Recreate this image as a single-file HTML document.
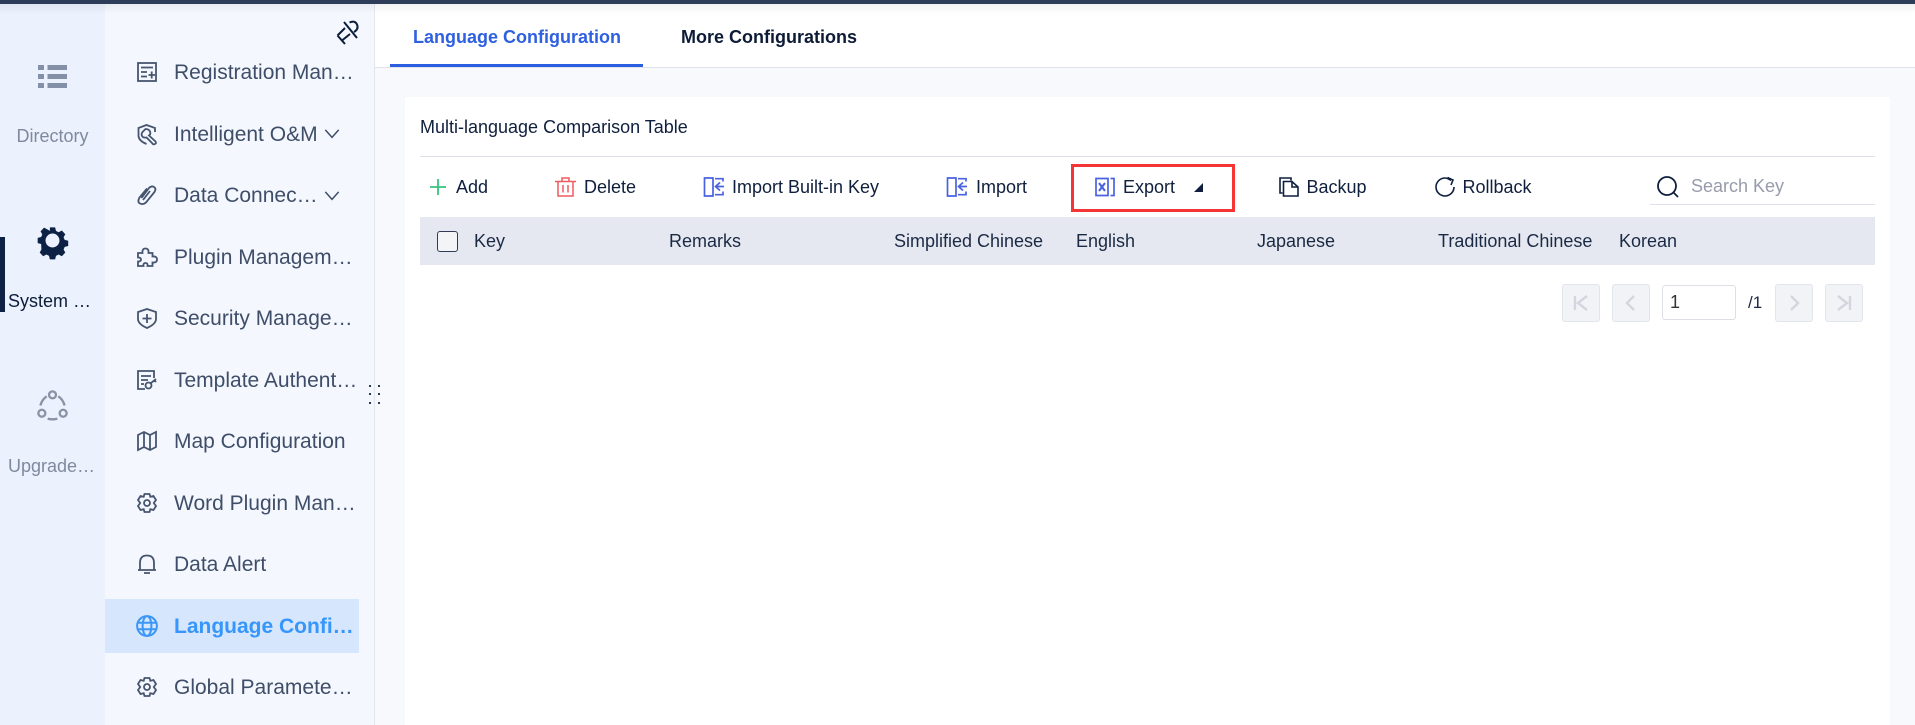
<!DOCTYPE html>
<html><head><meta charset="utf-8">
<style>
html,body{margin:0;padding:0;width:1915px;height:725px;overflow:hidden;background:#f8f9fd;font-family:"Liberation Sans",sans-serif}
.a{position:absolute}
.t{position:absolute;white-space:nowrap;line-height:30px;height:30px}
.m{font-size:21px;color:#3f4e68;left:174px}
.r{font-size:18px;color:#7f8a9e;text-align:center;left:0;width:105px}
.h{font-size:18px;color:#1b2a44}
.b{font-size:18px;color:#0f1f3d}
svg{position:absolute;fill:none;overflow:visible}
.si{stroke:#46556f;stroke-width:1.8;width:20px;height:20px;left:137px}
.pg{position:absolute;top:284px;width:36px;height:36px;background:#f2f3f7;border:1px solid #e3e5ec;border-radius:3px}
.pg svg{left:9px;top:9px;width:18px;height:18px;stroke:#d3d6de;stroke-width:2.4}
</style></head><body>
<div class="a" style="left:0;top:4px;width:105px;height:721px;background:#ebf1fd"></div>
<div class="a" style="left:105px;top:4px;width:269px;height:721px;background:#f4f7fe"></div>
<div class="a" style="left:374px;top:4px;width:1px;height:721px;background:#e3e6ef"></div>
<div class="a" style="left:375px;top:4px;width:1540px;height:63px;background:#fff"></div>
<div class="a" style="left:375px;top:67px;width:1540px;height:1px;background:#dfe2ea"></div>
<div class="a" style="left:390px;top:64px;width:253px;height:3px;background:#2b5fe0"></div>
<div class="a" style="left:0;top:4px;width:1915px;height:10px;background:linear-gradient(rgba(0,0,0,.05),rgba(0,0,0,0))"></div>
<div class="a" style="left:0;top:0;width:1915px;height:4px;background:#2c3c59"></div>
<div class="t" style="left:413px;top:22px;font-size:18px;font-weight:bold;color:#2e60e0">Language Configuration</div>
<div class="t" style="left:681px;top:22px;font-size:18px;font-weight:bold;color:#0d1b36">More Configurations</div>

<!-- rail -->
<svg style="left:38px;top:64px;width:30px;height:25px"><g fill="#8490a8"><rect x="0" y="1" width="6" height="5"/><rect x="0" y="10" width="6" height="5"/><rect x="0" y="19" width="6" height="5"/><rect x="9.500" y="1" width="19.500" height="5"/><rect x="9.500" y="10" width="19.500" height="5"/><rect x="9.500" y="19" width="19.500" height="5"/></g></svg>
<div class="t r" style="top:121px">Directory</div>
<div class="a" style="left:0;top:237px;width:5px;height:75px;background:#0c2143"></div>
<svg viewBox="0 0 32 32" style="left:36.500px;top:225px;width:31px;height:31px"><path fill="#0c2143" fill-rule="evenodd" d="M13 1h6l1 4 3 1.500 3.700-2 4 4.300-2 3.500 1.300 3 4 1v6l-4 1-1.300 3 2 3.500-4 4.300-3.700-2-3 1.500-1 4h-6l-1-4-3-1.500-3.700 2-4-4.300 2-3.500L3 20l-4-1v-6l4-1 1.300-3-2-3.500 4-4.300 3.700 2L13 5z M16 8a8 8 0 1 0 0 16a8 8 0 1 0 0-16z" transform="translate(1.600 1.600) scale(.9)"/></svg>
<div class="t" style="left:8px;top:286px;font-size:18px;color:#0c1d3a;width:85px">System …</div>
<svg viewBox="0 0 32 32" style="left:37px;top:390px;width:31px;height:31px;stroke:#8a93a5;stroke-width:2.400"><circle cx="16" cy="5" r="3.600"/><circle cx="5" cy="24" r="3.600"/><circle cx="27" cy="24" r="3.600"/><path d="M10 6.500Q5 10 3.500 16M22 6.500Q27 10 28.500 16M11 29.500Q16 31 21 29.500"/></svg>
<div class="t r" style="top:451px;left:8px;width:auto">Upgrade…</div>

<!-- pin -->
<svg viewBox="0 0 34 30" style="left:330px;top:15px;width:34px;height:30px;stroke:#0c1d3a;stroke-width:2"><path d="M14 7L27 23M7.500 20.500L15 13M7.500 20.500L15 29M12 25.500L20 19M19.500 7.500Q25 5 27 9.500T24 17"/></svg>

<!-- menu -->
<svg class="si" viewBox="0 0 20 20" style="top:62px"><rect x="1" y="1" width="18" height="18"/><path d="M4 5.500h12M4 10h6M4 14.500h6M11.500 13h6.500M14.700 9.500v7"/></svg>
<div class="t m" style="top:58px">Registration Man…</div>
<svg class="si" viewBox="0 0 20 20" style="top:124px"><path d="M18 8V4L9.500 1L1.500 4V12Q2 17 9.500 20M5.500 8L8.500 5Q12 5 13 7.500T12 11.500L18 17Q20 19 18 20T15 19L9.500 13.500Q6 14 5 12T5.500 8Z"/></svg>
<div class="t m" style="top:120px">Intelligent O&amp;M</div>
<svg viewBox="0 0 18 12" style="left:324px;top:129px;width:16px;height:10px;stroke:#3f4e68;stroke-width:1.800"><path d="M1 1l8 9 8-9"/></svg>
<svg class="si" viewBox="0 0 20 20" style="top:185px"><path d="M4.500 13L12 3Q14.500 .5 17 2T17.500 7L9 17.500Q6 20 3 18.500T2.500 12.500L10 3.500M6 15L13 6"/></svg>
<div class="t m" style="top:181px">Data Connec…</div>
<svg viewBox="0 0 18 12" style="left:324px;top:191px;width:16px;height:10px;stroke:#3f4e68;stroke-width:1.800"><path d="M1 1l8 9 8-9"/></svg>
<svg class="si" viewBox="0 0 20 20" style="top:247px"><path d="M1 6H5.500Q5 1.500 8.500 1.500T11.500 6H15.500V9.500Q20 9 20 12.500T15.500 15.500V19H10.500Q11 16 8.500 16T6.500 19H1V14.500Q4 14.500 4 12.500T1 10.500Z"/></svg>
<div class="t m" style="top:243px">Plugin Managem…</div>
<svg class="si" viewBox="0 0 20 20" style="top:308px"><path d="M10 1L19 4V11Q19 16 10 20Q1 16 1 11V4ZM10 6V15M5.500 10.500H14.500"/></svg>
<div class="t m" style="top:304px">Security Manage…</div>
<svg class="si" viewBox="0 0 20 20" style="top:370px"><path d="M8 19H1V1H17V8M4 6H14M4 10H11M4 14H7M14 13L19 9M17 10L19 12"/><circle cx="11.500" cy="15.500" r="3"/></svg>
<div class="t m" style="top:366px">Template Authent…</div>
<svg class="si" viewBox="0 0 20 20" style="top:431px"><path d="M1 4L7 1L13 4L19 1V16L13 19L7 16L1 19ZM7 1V16M13 4V19"/></svg>
<div class="t m" style="top:427px">Map Configuration</div>
<svg class="si" viewBox="0 0 20 20" style="top:493px"><path d="M7.500 1H12.500L13.300 3.800L16.500 3L19 7L16.800 10L19 13L16.500 17L13.300 16.200L12.500 19H7.500L6.700 16.200L3.500 17L1 13L3.200 10L1 7L3.500 3L6.700 3.800Z"/><circle cx="10" cy="10" r="3"/></svg>
<div class="t m" style="top:489px">Word Plugin Man…</div>
<svg class="si" viewBox="0 0 20 20" style="top:554px"><path d="M1 16H19M3 16V9Q3 1.500 10 1.500T17 9V16M7 19H13"/></svg>
<div class="t m" style="top:550px">Data Alert</div>
<div class="a" style="left:105px;top:599px;width:254px;height:54px;background:#d6e6fd"></div>
<svg class="si" viewBox="0 0 20 20" style="top:615px;left:136px;width:22px;height:22px;stroke:#3a97f8"><circle cx="10" cy="10" r="9"/><ellipse cx="10" cy="10" rx="4" ry="9"/><path d="M1.500 7H18.500M1.500 13H18.500"/></svg>
<div class="t m" style="top:612px;color:#3696fb;font-weight:bold">Language Confi…</div>
<svg class="si" viewBox="0 0 20 20" style="top:677px"><path d="M7.500 1H12.500L13.300 3.800L16.500 3L19 7L16.800 10L19 13L16.500 17L13.300 16.200L12.500 19H7.500L6.700 16.200L3.500 17L1 13L3.200 10L1 7L3.500 3L6.700 3.800Z"/><circle cx="10" cy="10" r="3"/></svg>
<div class="t m" style="top:673px">Global Paramete…</div>

<!-- drag handle -->
<svg style="left:368px;top:384px;width:14px;height:22px"><g fill="#2a3a55"><rect x="1" y="1" width="2" height="2"/><rect x="10" y="1" width="2" height="2"/><rect x="1" y="9" width="2" height="2"/><rect x="10" y="9" width="2" height="2"/><rect x="1" y="18" width="2" height="2"/><rect x="10" y="18" width="2" height="2"/></g></svg>

<!-- card -->
<div class="a" style="left:405px;top:97px;width:1485px;height:628px;background:#fff"></div>
<div class="t b" style="left:420px;top:112px">Multi-language Comparison Table</div>
<div class="a" style="left:420px;top:156px;width:1455px;height:1px;background:#dfe1e8"></div>

<!-- toolbar -->
<svg viewBox="0 0 16 16" style="left:430px;top:179px;width:16px;height:16px;stroke:#37c27d;stroke-width:1.800"><path d="M8 0V16M0 8H16"/></svg>
<div class="t b" style="left:456px;top:172px">Add</div>
<svg viewBox="0 0 21 20" style="left:555px;top:177px;width:21px;height:20px;stroke:#ef5a5f;stroke-width:1.500"><path d="M0 4.500H21M7 4.500V1H14V4.500M3 4.500V19H18V4.500M8 8V15.500M13 8V15.500"/></svg>
<div class="t b" style="left:584px;top:172px">Delete</div>
<svg viewBox="0 0 20 20" style="left:704px;top:177px;width:20px;height:20px;stroke:#4a62e0;stroke-width:1.700"><path d="M.5 1H9V19H.5ZM11 1.700H19V4.500M11 17.700H19V14.500M20 9.500H12M16 5.500L11.500 9.500L16 13.500"/></svg>
<div class="t b" style="left:732px;top:172px">Import Built-in Key</div>
<svg viewBox="0 0 20 20" style="left:947px;top:177px;width:20px;height:20px;stroke:#4a62e0;stroke-width:1.700"><path d="M.5 1H9V19H.5ZM11 1.700H19V4.500M11 17.700H19V14.500M20 9.500H12M16 5.500L11.500 9.500L16 13.500"/></svg>
<div class="t b" style="left:976px;top:172px">Import</div>
<div class="a" style="left:1071px;top:164px;width:158px;height:42px;border:3px solid #f33535"></div>
<svg viewBox="0 0 20 20" style="left:1095px;top:177px;width:20px;height:20px;stroke:#4a62e0;stroke-width:1.700"><path d="M1 1.500H13V18.500H1ZM15.500 1.500H19V18.500H15.500"/><path stroke-width="2.100" d="M4 6L10 14M10 6L4 14"/></svg>
<div class="t b" style="left:1123px;top:172px">Export</div>
<svg style="left:1194px;top:183px;width:8px;height:8px"><path fill="#0f1f3d" d="M9 0V9H0Z"/></svg>
<svg viewBox="0 0 20 20" style="left:1279px;top:177px;width:20px;height:20px;stroke:#0f1f3d;stroke-width:1.600"><path d="M3.500 16H1V1H12V3.500M4.500 4.500H13L19 10V19H4.500ZM13 4.500V10H19"/></svg>
<div class="t b" style="left:1306.500px;top:172px">Backup</div>
<svg viewBox="0 0 20 20" style="left:1435px;top:177px;width:20px;height:20px;stroke:#0f1f3d;stroke-width:1.600"><path d="M16 3.500Q12.500 1 10 1A9 9 0 1 0 19 10M12.500 .5L18 3L16 8"/></svg>
<div class="t b" style="left:1462.500px;top:172px">Rollback</div>
<svg viewBox="0 0 22 22" style="left:1657px;top:176px;width:22px;height:22px;stroke:#0f1f3d;stroke-width:1.800"><circle cx="10" cy="10" r="9"/><path d="M16.500 16.500L21 21"/></svg>
<div class="t" style="left:1691px;top:171px;font-size:18px;color:#969cab">Search Key</div>
<div class="a" style="left:1650px;top:204px;width:225px;height:1px;background:#e0e2e9"></div>

<!-- table head -->
<div class="a" style="left:420px;top:217px;width:1455px;height:48px;background:#e5e8f0"></div>
<div class="a" style="left:437px;top:231px;width:19px;height:19px;border:1px solid #2f3c54;border-radius:3px;background:#f3f4f7"></div>
<div class="t h" style="left:474px;top:226px">Key</div>
<div class="t h" style="left:669px;top:226px">Remarks</div>
<div class="t h" style="left:894px;top:226px">Simplified Chinese</div>
<div class="t h" style="left:1076px;top:226px">English</div>
<div class="t h" style="left:1257px;top:226px">Japanese</div>
<div class="t h" style="left:1438px;top:226px">Traditional Chinese</div>
<div class="t h" style="left:1619px;top:226px">Korean</div>

<!-- pagination -->
<div class="pg" style="left:1562px"><svg viewBox="0 0 18 18"><path d="M3 2V16M15 2L6 9L15 16"/></svg></div>
<div class="pg" style="left:1612px"><svg viewBox="0 0 18 18"><path d="M12 2L5 9L12 16"/></svg></div>
<div class="a" style="left:1662px;top:285px;width:72px;height:33px;border:1px solid #dcdfe6;border-radius:3px;background:#fff"></div>
<div class="t" style="left:1670px;top:287px;font-size:18px;color:#333">1</div>
<div class="t" style="left:1748px;top:288px;font-size:17px;color:#1b2a44">/1</div>
<div class="pg" style="left:1775px"><svg viewBox="0 0 18 18"><path d="M6 2L13 9L6 16"/></svg></div>
<div class="pg" style="left:1825px"><svg viewBox="0 0 18 18"><path d="M15 2V16M3 2L12 9L3 16"/></svg></div>
</body></html>
